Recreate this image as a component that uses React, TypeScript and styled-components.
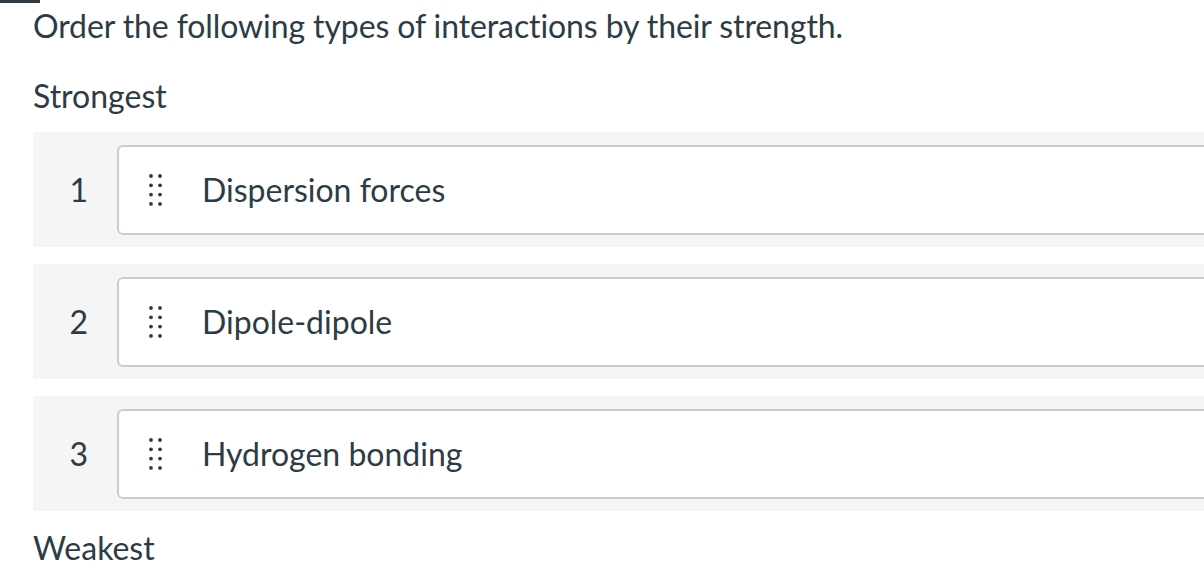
import React from "react";
import styled, { createGlobalStyle } from "styled-components";

const GlobalStyle = createGlobalStyle`
  body {
    margin: 0;
    overflow: hidden;
    background: #ffffff;
    color: #2d3b45;
    font-family: Lato, "Open Sans", sans-serif;
  }
`;

const TopRule = styled.div`
  width: 40px;
  height: 3px;
  background: #2d3b45;
`;

const Page = styled.div`
  padding: 0 0 0 33px;
`;

const Prompt = styled.p`
  margin: 4px 0 0;
  font-size: 32px;
  line-height: 38px;
  letter-spacing: -0.1px;
`;

const Label = styled.p<{ $top: number }>`
  margin: 0;
  font-size: 32px;
  line-height: 38px;
  padding-top: ${(p) => p.$top}px;
`;

const List = styled.ol`
  list-style: none;
  margin: 17px 0 0;
  padding: 0;
  width: 1300px;

  display: flex;
  flex-direction: column;
  gap: 17px;
`;

const Row = styled.li`
  height: 115px;
  background: #f5f5f5;

  display: grid;
  grid-template-columns: 84px 1fr;
  align-items: center;
`;

const Rank = styled.span`
  text-align: right;
  padding-right: 29px;
  font-size: 32px;
`;

const Card = styled.div`
  height: 90px;
  box-sizing: border-box;
  background: #ffffff;
  border: 2px solid #c7cdd1;
  border-radius: 6px;

  display: flex;
  align-items: center;
  padding-left: 30px;
  gap: 40px;
`;

const Name = styled.span`
  font-size: 32px;
`;

// drag handle: two columns of four dots
const Grip = () => (
  <svg width="13" height="32" viewBox="0 0 13 32" fill="#2d3b45">
    {[0, 1, 2, 3].map((r) =>
      [0, 1].map((c) => (
        <circle key={`${r}-${c}`} cx={2 + c * 9} cy={2 + r * 9.3} r={1.9} />
      ))
    )}
  </svg>
);

const items = ["Dispersion forces", "Dipole-dipole", "Hydrogen bonding"];

const App: React.FC = () => {
  return (
    <>
      <GlobalStyle />
      <TopRule />
      <Page>
        <Prompt>Order the following types of interactions by their strength.</Prompt>
        <Label $top={32}>Strongest</Label>
        <List>
          {items.map((item, i) => (
            <Row key={item}>
              <Rank>{i + 1}</Rank>
              <Card>
                <Grip />
                <Name>{item}</Name>
              </Card>
            </Row>
          ))}
        </List>
        <Label $top={18}>Weakest</Label>
      </Page>
    </>
  );
};

export default App;
